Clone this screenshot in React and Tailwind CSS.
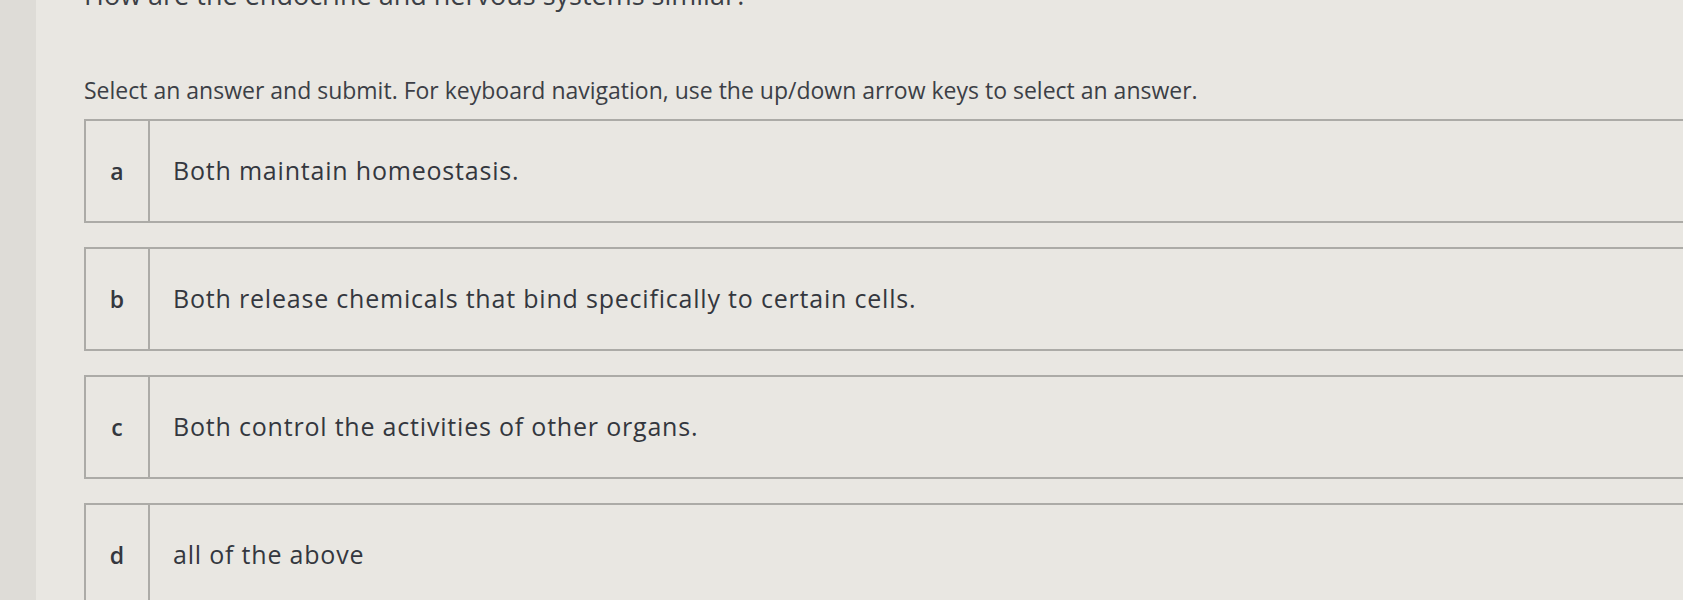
import React from "react";

const answers = [
  { k: "a", t: "Both maintain homeostasis." },
  { k: "b", t: "Both release chemicals that bind specifically to certain cells." },
  { k: "c", t: "Both control the activities of other organs." },
  { k: "d", t: "all of the above" },
];

export default function App() {
  return (
    <div
      className="flex h-[600px] w-full overflow-hidden bg-[#e9e7e2] text-[#34373e]"
      style={{ fontFamily: "'Open Sans', Lato, sans-serif" }}
    >
      <div className="w-[36px] shrink-0 bg-[#dedcd7]" />
      <div className="flex min-w-0 flex-1 flex-col pl-[48px]">
        <h1 className="mt-[-22px] whitespace-nowrap text-[27px] leading-[34px] text-[#3c3f46]">
          How are the endocrine and nervous systems similar?
        </h1>
        <p className="mt-[63px] whitespace-nowrap text-[23px] leading-[30px] text-[#3c3f46]">
          Select an answer and submit. For keyboard navigation, use the up/down arrow keys to select an answer.
        </p>
        <div className="mt-[14px] mr-[-40px] flex flex-col gap-[24px]">
          {answers.map((a) => (
            <div
              key={a.k}
              className="flex h-[104px] shrink-0 border-2 border-[#acaba7]"
            >
              <div className="flex w-[64px] shrink-0 items-center justify-center border-r-2 border-[#acaba7] text-[23px] font-semibold">
                {a.k}
              </div>
              <div className="flex items-center pl-[23px] text-[25px] tracking-[0.8px] whitespace-nowrap">
                {a.t}
              </div>
            </div>
          ))}
        </div>
      </div>
    </div>
  );
}
